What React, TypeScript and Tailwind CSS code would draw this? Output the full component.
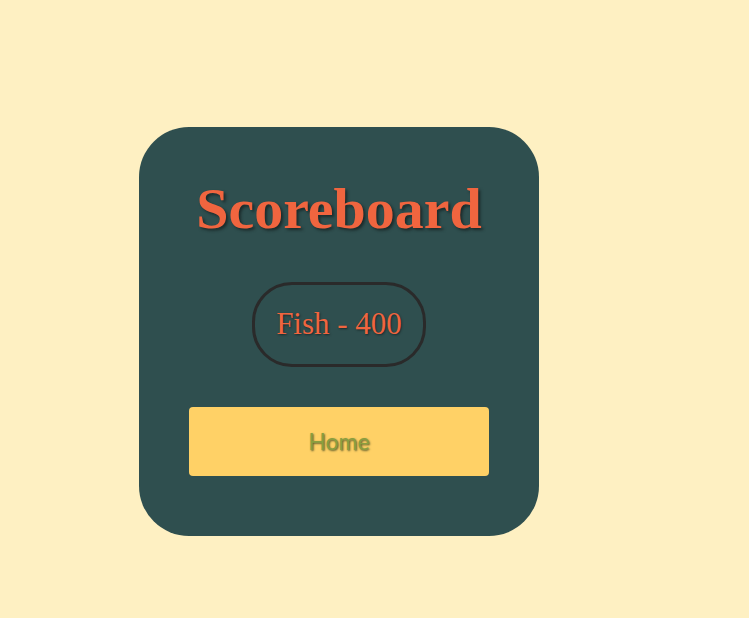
export default function App() {
  return (
    <div className="min-h-screen w-full bg-[#fef0c2] pt-[127px] pl-[139px]">
      <div className="flex h-[409px] w-[400px] flex-col items-center rounded-[50px] bg-[#2f4f4f] pt-[53px]">
        <h1
          className="text-[58px] leading-none font-bold text-[#f0653f] [text-shadow:2px_2px_3px_#1b2a2a]"
          style={{fontFamily: '"Liberation Serif", serif'}}>
          Scoreboard
        </h1>

        <div className="mt-[44px] rounded-[40px] border-[3px] border-[#2a2a2a] px-[21px] pt-[23px] pb-[25px]">
          <p
            className="text-[31px] leading-none text-[#f0653f] [text-shadow:1px_1px_2px_#1b2a2a]"
            style={{fontFamily: '"Liberation Serif", serif'}}>
            Fish - 400
          </p>
        </div>

        <button
          className="mt-[40px] flex h-[69px] w-[300px] items-center justify-center rounded-[4px] bg-[#ffd166] text-[23px] text-[#8a9f3f] [text-shadow:1px_1px_2px_#5a5a2a]"
          style={{fontFamily: 'Lato, sans-serif'}}>
          Home
        </button>
      </div>
    </div>
  )
}
